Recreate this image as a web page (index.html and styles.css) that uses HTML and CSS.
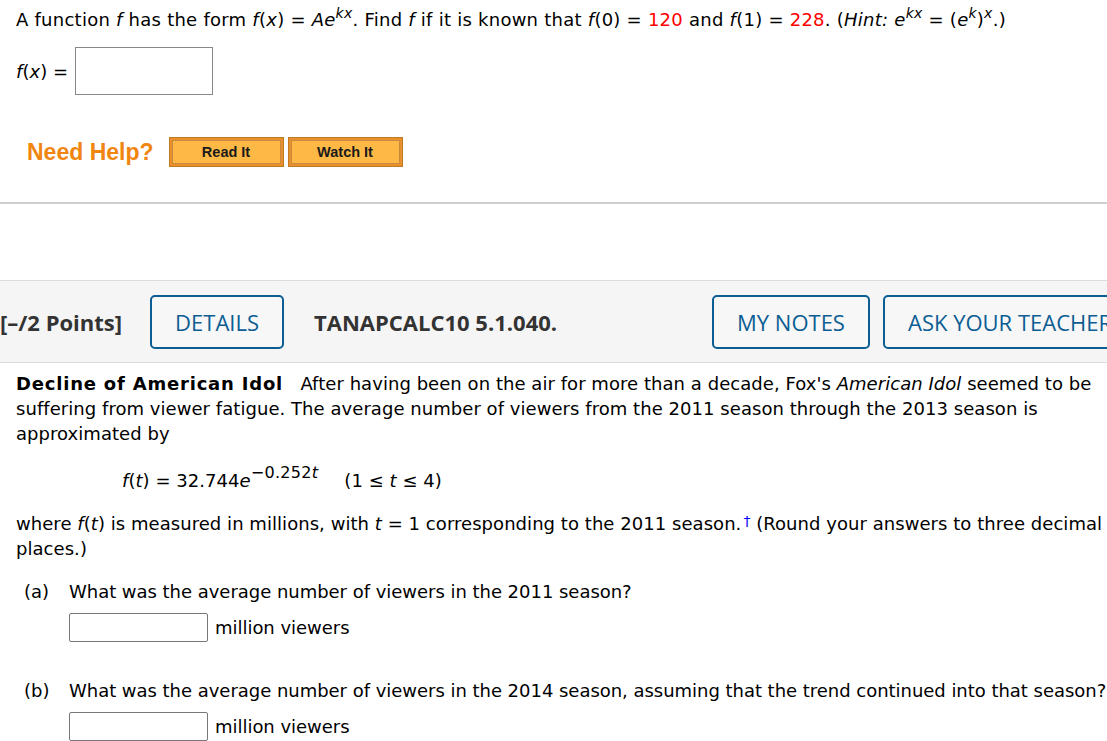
FILE: index.html
```html
<!DOCTYPE html>
<html>
<head>
<meta charset="utf-8">
<link rel="stylesheet" href="styles.css">
</head>
<body>
<section class="prev">
  <p class="q1">A function <i>f</i> has the form <i>f</i>(<i>x</i>) = <i>Ae</i><sup><i>kx</i></sup>. Find <i>f</i> if it is known that <i>f</i>(0) = <span class="red">120</span> and <i>f</i>(1) = <span class="red">228</span>. (<i>Hint:</i> <i>e</i><sup><i>kx</i></sup> = (<i>e</i><sup><i>k</i></sup>)<sup><i>x</i></sup>.)</p>
  <div class="ans-row"><span class="fx"><i>f</i>(<i>x</i>) = </span><span class="big-input"></span></div>
  <div class="help">
    <span class="need">Need Help?</span>
    <span class="obtn">Read It</span>
    <span class="obtn">Watch It</span>
  </div>
</section>
<div class="spacer"></div>
<div class="bar">
  <span class="points">[–/2 Points]</span>
  <span class="bbtn details">DETAILS</span>
  <span class="code">TANAPCALC10 5.1.040.</span>
  <span class="grow"></span>
  <span class="bbtn notes">MY NOTES</span>
  <span class="bbtn ask">ASK YOUR TEACHER</span>
</div>
<section class="prob">
  <p class="para"><b class="title">Decline of American Idol</b>&nbsp;&nbsp; After having been on the air for more than a decade, Fox's <i>American Idol</i> seemed to be suffering from viewer fatigue. The average number of viewers from the 2011 season through the 2013 season is approximated by</p>
  <p class="formula"><i>f</i>(<i>t</i>) = 32.744<i>e</i><sup class="fsup">−0.252<i>t</i></sup><span class="range">(1 ≤ <i>t</i> ≤ 4)</span></p>
  <p class="para where">where <i>f</i>(<i>t</i>) is measured in millions, with <i>t</i> = 1 corresponding to the 2011 season.<span class="dag">†</span> (Round your answers to three decimal places.)</p>
  <div class="part">
    <div class="qrow"><span class="lbl">(a)</span><span>What was the average number of viewers in the 2011 season?</span></div>
    <div class="arow"><span class="sm-input"></span><span>million viewers</span></div>
  </div>
  <div class="part">
    <div class="qrow"><span class="lbl">(b)</span><span>What was the average number of viewers in the 2014 season, assuming that the trend continued into that season?</span></div>
    <div class="arow"><span class="sm-input"></span><span>million viewers</span></div>
  </div>
</section>
</body>
</html>
```
FILE: styles.css
```css
html, body { margin: 0; padding: 0; background: #fff; }
body {
  font-family: "DejaVu Sans", Verdana, sans-serif;
  font-size: 18px;
  letter-spacing: 0.05px;
  color: #000;
  width: 1107px;
  overflow: hidden;
}
p { margin: 0; }
sup { font-size: 14px; line-height: 0; vertical-align: 8px; }
.red { color: #f00; }

.prev { padding: 0 0 0 16px; }
.q1 { padding-top: 8px; line-height: 24px; white-space: nowrap; letter-spacing: 0.25px; }
.ans-row { display: flex; align-items: center; margin-top: 15px; }
.fx { width: 59px; }
.big-input { width: 136px; height: 46px; border: 1px solid #888; display: block; }
.help { display: flex; align-items: center; margin-top: 43px; padding-left: 11px; letter-spacing: 0; }
.need { font-family: "Liberation Sans", Arial, sans-serif; font-weight: bold; font-size: 23px; color: #f0860f; margin-right: 16px; }
.obtn {
  font-family: "Liberation Sans", Arial, sans-serif; font-weight: bold; font-size: 14.5px; color: #1a1a1a;
  width: 109px; height: 24px; line-height: 24px; text-align: center;
  background: #fdb845; border: 2px solid #e8902e;
  box-shadow: 0 0 0 1px #c07a22, inset 0 0 0 1px #c88a3a;
  margin-right: 6px;
}
.spacer { border-top: 2px solid #cfcfcf; margin-top: 36px; height: 76px; }

.bar {
  display: flex; align-items: center; height: 81px;
  background: #f5f5f5; border-top: 1px solid #dcdcdc; border-bottom: 1px solid #dcdcdc;
  font-family: "Open Sans", "Noto Sans", sans-serif; font-size: 22px; letter-spacing: 0;
  white-space: nowrap;
}
.points { font-weight: bold; color: #333; }
.bbtn {
  display: flex; align-items: center; justify-content: center;
  height: 54px; border: 2px solid #0b5d93; border-radius: 5px; color: #0b5d93; background: #f7f7f7;
  box-sizing: border-box; flex-shrink: 0;
}
.details { width: 134px; margin-left: 28px; }
.code { font-weight: bold; color: #333; margin-left: 30px; }
.grow { flex: 1; }
.notes { width: 158px; }
.ask { width: 260px; margin-left: 13px; margin-right: -36px; justify-content: flex-start; padding-left: 23px; }

.prob { padding: 8px 0 0 16px; }
.para { line-height: 25px; }
.title { font-weight: bold; letter-spacing: 0.8px; }
.formula { margin: 22px 0 18px 106px; line-height: 25px; }
.fsup { font-size: 16px; vertical-align: 9px; letter-spacing: 0.3px; }
.range { margin-left: 26px; }
.dag { color: #00f; font-size: 14px; line-height: 0; vertical-align: 4px; margin-left: 2px; }
.part { margin-top: 18px; padding-left: 8px; letter-spacing: -0.03px; }
.part + .part { margin-top: 36px; }
.qrow { display: flex; line-height: 25px; white-space: nowrap; }
.lbl { width: 45px; flex-shrink: 0; }
.arow { display: flex; align-items: center; margin-top: 9px; padding-left: 45px; }
.sm-input { width: 137px; height: 27px; border: 1px solid #777; border-radius: 2px; margin-right: 7px; flex-shrink: 0; }
```
